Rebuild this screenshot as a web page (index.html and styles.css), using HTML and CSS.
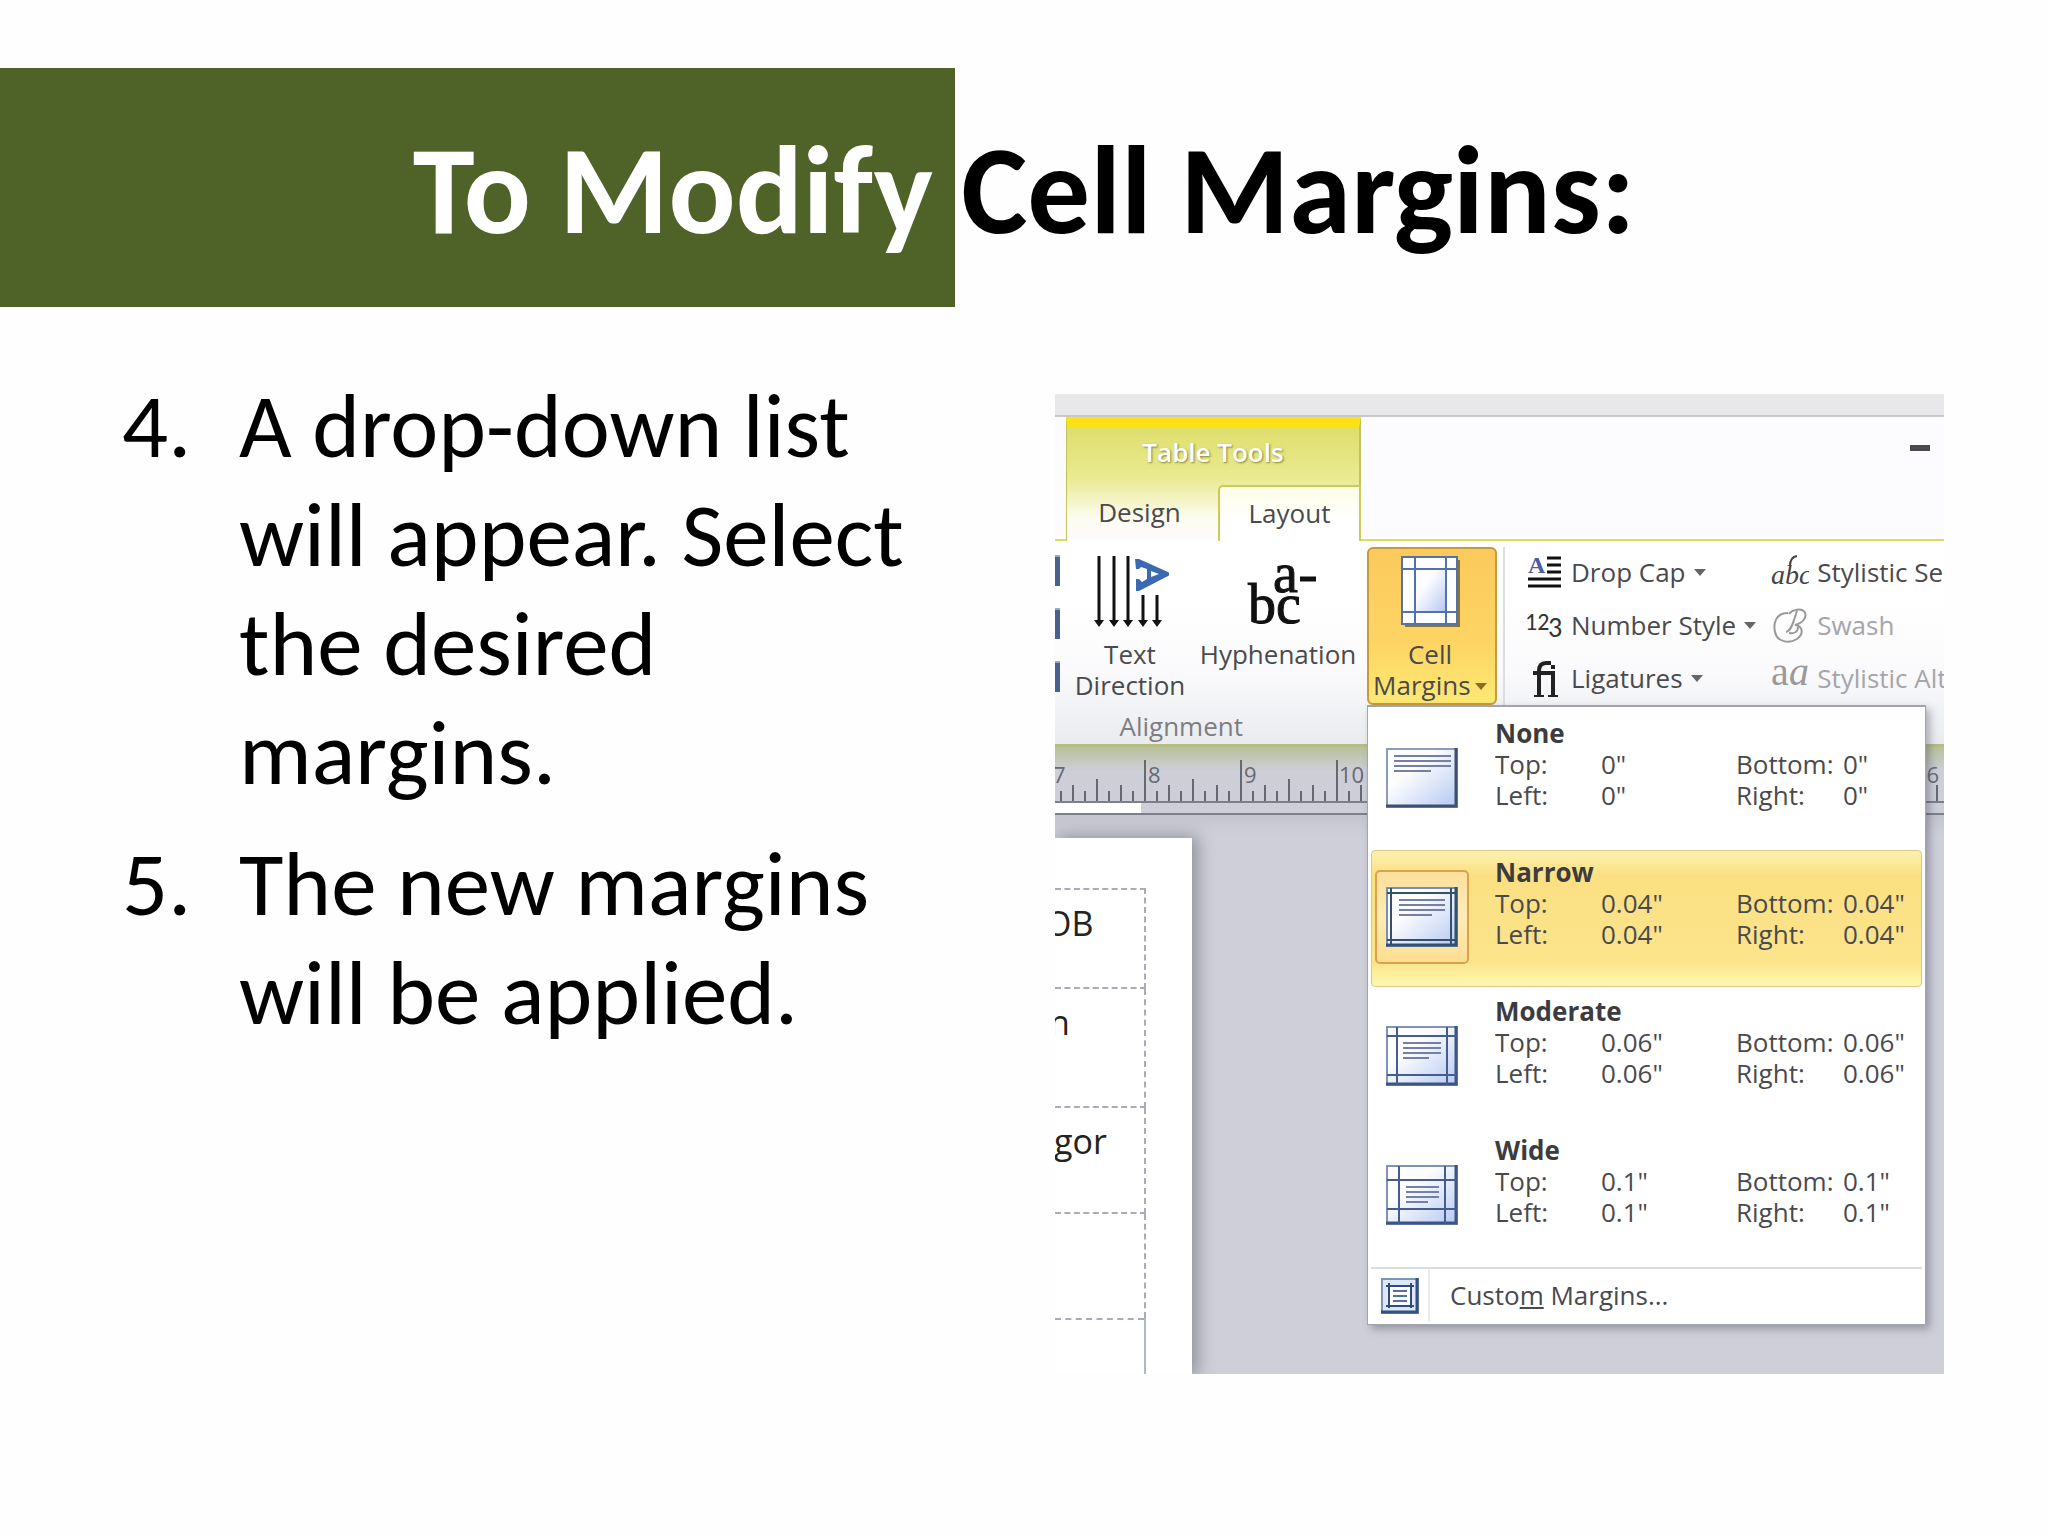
FILE: index.html
```html
<!DOCTYPE html>
<html lang="en">
<head>
<meta charset="utf-8">
<title>To Modify Cell Margins</title>
<link rel="stylesheet" href="styles.css">
</head>
<body>
<svg class="defs" width="0" height="0" aria-hidden="true">
  <defs>
    <linearGradient id="paper" x1="0" y1="0" x2="1" y2="1">
      <stop offset="0.35" stop-color="#fdfdff"/>
      <stop offset="1" stop-color="#b4c8f2"/>
    </linearGradient>
  </defs>
</svg>
<header class="banner">
  <h1 class="title"><span class="title-light">To Modify</span> Cell Margins:</h1>
</header>
<main class="content">
  <ol class="steps" start="4">
    <li class="step"><span>A drop-down list will appear. Select the desired margins.</span></li>
    <li class="step"><span>The new margins will be applied.</span></li>
  </ol>

  <section class="app" aria-label="Table Tools ribbon">
    <div class="app-top"></div>
    <div class="tabbar">
      <div class="context">
        <div class="context-label">Table Tools</div>
        <div class="tabs">
          <button class="tab" type="button">Design</button>
          <button class="tab tab-active" type="button">Layout</button>
        </div>
      </div>
      <button class="minimize" type="button" aria-label="Minimize"></button>
    </div>

    <div class="ribbon">
      <div class="group">
        <div class="group-tools">
          <div class="slivers"><i></i><i></i><i></i></div>
          <button class="tool tool-direction" type="button">
            <svg class="tool-icon" width="78" height="74" viewBox="0 0 78 74">
              <g stroke="#111" stroke-width="3">
                <path d="M8 1V68M23 1V68M37 1V68M52 40V68M66 40V68"/>
              </g>
              <path fill="#111" d="M3 65h10l-5 7zM18 65h10l-5 7zM32 65h10l-5 7zM47 65h10l-5 7zM61 65h10l-5 7z"/>
              <path fill="#3c69b4" fill-rule="evenodd" d="M44 4h4l31 14v2L48 36h-3V24h3l3 3 5-3V14l-6-2-2 2h-3zM60 16v6l8-3z"/>
            </svg>
            <span>Text<br>Direction</span>
          </button>
          <button class="tool tool-hyphen" type="button">
            <svg class="tool-icon" width="78" height="74" viewBox="0 0 78 74">
              <text class="glyph-serif" x="34" y="37">a</text>
              <text class="glyph-serif" x="9" y="68">bc</text>
              <path stroke="#111" stroke-width="5" d="M61 24h16"/>
            </svg>
            <span>Hyphenation</span>
          </button>
        </div>
        <div class="group-label">Alignment</div>
      </div>

      <div class="menu-anchor">
        <button class="tool tool-open" type="button" aria-expanded="true">
          <svg class="tool-icon" width="60" height="74" viewBox="0 0 60 74">
            <path fill="#8a7333" d="M5 5h55v67H5z"/>
            <path fill="#fff" d="M2 2h55v67H2z"/>
            <path fill="url(#paper)" d="M15 14h31v43H15z"/>
            <path fill="none" stroke="#5272a8" stroke-width="2" d="M2 2h55v67H2zM15 2v67M46 2v67M2 14h55M2 57h55"/>
          </svg>
          <span>Cell<br>Margins&thinsp;<i class="caret"></i></span>
        </button>
        <div class="menu" role="menu">
          <button class="option" type="button" role="menuitem">
            <span class="thumb"><svg width="72" height="60" viewBox="0 0 72 60">
              <path fill="url(#paper)" stroke="#8b9cba" stroke-width="2" d="M1 1h70v58H1z"/>
              <path fill="none" stroke="#3d4f73" stroke-width="3" d="M70 0v58H0"/>
              <path stroke="#7480a8" stroke-width="2" d="M8 8h57M8 13h57M8 18h57M8 23h37"/>
            </svg></span>
            <span class="values"><b>None</b>
              <span>Top:</span><span>0"</span><span>Bottom:</span><span>0"</span>
              <span>Left:</span><span>0"</span><span>Right:</span><span>0"</span></span>
          </button>
          <button class="option option-active" type="button" role="menuitem">
            <span class="thumb"><svg width="72" height="60" viewBox="0 0 72 60">
              <path fill="url(#paper)" stroke="#7890b0" stroke-width="2" d="M1 1h70v58H1z"/>
              <path fill="none" stroke="#35506f" stroke-width="3" d="M70 0v58H0"/>
              <path fill="none" stroke="#35506f" stroke-width="2" d="M5 1v58M65 1v58M1 6h70M1 53h70"/>
              <path stroke="#7480a8" stroke-width="2" d="M13 13h46M13 18h46M13 23h46M13 28h33"/>
            </svg></span>
            <span class="values"><b>Narrow</b>
              <span>Top:</span><span>0.04"</span><span>Bottom:</span><span>0.04"</span>
              <span>Left:</span><span>0.04"</span><span>Right:</span><span>0.04"</span></span>
          </button>
          <button class="option" type="button" role="menuitem">
            <span class="thumb"><svg width="72" height="60" viewBox="0 0 72 60">
              <path fill="url(#paper)" stroke="#7f92b8" stroke-width="2" d="M1 1h70v58H1z"/>
              <path fill="none" stroke="#3d5585" stroke-width="3" d="M70 0v58H0"/>
              <path fill="none" stroke="#455c8c" stroke-width="2" d="M11 1v58M61 1v58M1 10h70M1 49h70"/>
              <path stroke="#7480a8" stroke-width="2" d="M17 17h38M17 22h38M17 27h38M17 32h26"/>
            </svg></span>
            <span class="values"><b>Moderate</b>
              <span>Top:</span><span>0.06"</span><span>Bottom:</span><span>0.06"</span>
              <span>Left:</span><span>0.06"</span><span>Right:</span><span>0.06"</span></span>
          </button>
          <button class="option" type="button" role="menuitem">
            <span class="thumb"><svg width="72" height="60" viewBox="0 0 72 60">
              <path fill="url(#paper)" stroke="#7f92b8" stroke-width="2" d="M1 1h70v58H1z"/>
              <path fill="none" stroke="#3d5585" stroke-width="3" d="M70 0v58H0"/>
              <path fill="none" stroke="#455c8c" stroke-width="2" d="M13 1v58M59 1v58M1 15h70M1 44h70"/>
              <path stroke="#7480a8" stroke-width="2" d="M20 22h33M20 27h33M20 32h33M20 37h22"/>
            </svg></span>
            <span class="values"><b>Wide</b>
              <span>Top:</span><span>0.1"</span><span>Bottom:</span><span>0.1"</span>
              <span>Left:</span><span>0.1"</span><span>Right:</span><span>0.1"</span></span>
          </button>
          <button class="custom" type="button" role="menuitem">
            <span class="custom-icon"><svg width="38" height="36" viewBox="0 0 38 36">
              <path fill="#dde7fa" stroke="#7f92b8" stroke-width="2" d="M1 1h36v34H1z"/>
              <path fill="none" stroke="#35507f" stroke-width="3" d="M36 0v34H0"/>
              <path fill="#fff" d="M9 8h21v20H9z"/>
              <path fill="none" stroke="#2f4a7c" stroke-width="2" d="M8 5v25M30 5v25M5 8h28M5 28h28"/>
              <path stroke="#5470a4" stroke-width="2" d="M12 13h14M12 18h14M12 23h14"/>
            </svg></span>
            <span>Custo<u>m</u> Margins...</span>
          </button>
        </div>
      </div>

      <div class="features">
        <button class="feature" type="button">
          <svg width="38" height="38" viewBox="0 0 38 38">
            <path stroke="#111" stroke-width="3" d="M22 4h14M22 11h14M22 18h14M3 25h33M3 32h33"/>
            <text class="glyph-cap" x="3" y="19">A</text>
          </svg>Drop Cap <i class="caret"></i></button>
        <button class="feature" type="button">
          <svg width="38" height="38" viewBox="0 0 38 38">
            <text class="glyph-num" x="0" y="23">12</text>
            <text class="glyph-num glyph-three" x="23" y="30">3</text>
          </svg>Number Style <i class="caret"></i></button>
        <button class="feature" type="button">
          <svg width="38" height="38" viewBox="0 0 38 38">
            <path fill="none" stroke="#222" stroke-width="4" d="M14 36V11q0-8 7-8h5M28 36V13H8M28 5v4"/>
            <path stroke="#222" stroke-width="2" d="M9 36h10M23 36h10"/>
          </svg>Ligatures <i class="caret"></i></button>
      </div>
      <div class="features">
        <button class="feature" type="button">
          <svg width="38" height="38" viewBox="0 0 38 38">
            <text class="glyph-abc" x="0" y="30">abc</text>
            <path fill="none" stroke="#444" stroke-width="2" d="M19 12q0-9 7-10"/>
          </svg>Stylistic Se</button>
        <button class="feature" type="button" disabled>
          <svg width="38" height="38" viewBox="0 0 38 38">
            <path fill="none" stroke="#999" stroke-width="2" d="M17 6C5 6 2 16 4 25c2 10 14 12 22 7 7-5 6-13-2-14 8-2 12-8 10-12-3-6-13-3-16 1M26 4C23 12 21 24 15 25M18 26c5 1 9-1 9-6"/>
          </svg>Swash</button>
        <button class="feature" type="button" disabled>
          <svg width="38" height="38" viewBox="0 0 38 38">
            <text class="glyph-aa" x="0" y="25">a</text>
            <text class="glyph-aa glyph-italic" x="18" y="25">a</text>
          </svg>Stylistic Alt</button>
      </div>
    </div>

    <div class="ruler">
      <svg width="889" height="68" viewBox="0 0 889 68">
        <defs>
          <pattern id="inch" x="89" y="0" width="96" height="57" patternUnits="userSpaceOnUse">
            <path stroke="#666872" stroke-width="2" d="M1 13v42M13 44v12M25 38v18M37 44v12M49 32v24M61 44v12M73 38v18M85 44v12"/>
          </pattern>
        </defs>
        <path fill="url(#inch)" d="M0 0h889v56H0z"/>
        <path fill="#fff" d="M0 56h86v10H0z"/>
        <path stroke="#7d7f8a" stroke-width="2" d="M0 55h889M0 67h889"/>
        <g class="ruler-digits">
          <text x="-2" y="36">7</text><text x="93" y="36">8</text><text x="189" y="36">9</text>
          <text x="284" y="36">10</text><text x="859" y="36">16</text>
        </g>
      </svg>
    </div>

    <div class="document">
      <div class="page">
        <table class="grid">
          <tr class="row-head"><td class="cut-wide">OB</td></tr>
          <tr class="row-tall"><td class="cut">n</td></tr>
          <tr class="row-mid"><td class="cut-slight">gor</td></tr>
          <tr class="row-mid"><td></td></tr>
          <tr class="row-last"><td></td></tr>
        </table>
      </div>
    </div>
  </section>
</main>
</body>
</html>
```

FILE: styles.css
```css
* {
  box-sizing: border-box;
}

body {
  margin: 0;
  background: #fefefe;
  color: #000;
  font-family: Carlito, Lato, sans-serif;
}

button {
  margin: 0;
  padding: 0;
  border: 0;
  background: none;
  color: inherit;
  font: inherit;
  text-align: left;
}

i {
  font-style: normal;
}

svg {
  display: block;
  flex: none;
}

.defs {
  position: absolute;
}

/* Slide heading */
.banner {
  display: flex;
  justify-content: center;
  align-items: center;
  margin-top: 68px;
  min-height: 239px;
  padding-top: 6px;
  background: linear-gradient(#4f6228, #4f6228) left / 46.65% 100% no-repeat;
}

.title {
  margin: 0;
  font-size: 125px;
  line-height: 128px;
  font-weight: 700;
  white-space: nowrap;
}

.title-light {
  color: #fff;
}

/* Slide body */
.content {
  display: grid;
  grid-template-columns: minmax(0, 1fr) 889px;
  column-gap: 120px;
  align-items: start;
  padding: 64px 104px 64px 122px;
}

.steps {
  display: grid;
  gap: 22px;
  margin: 0;
  padding: 0;
  list-style: none;
  counter-reset: step 3;
  font-size: 91px;
  line-height: 109px;
}

.step {
  display: grid;
  grid-template-columns: 117px 1fr;
  counter-increment: step;
}

.step::before {
  content: counter(step) ".";
}

/* Application window */
.app {
  margin-top: 23px;
  overflow: hidden;
  color: #4a4a4e;
  font-family: "Open Sans", "Noto Sans", sans-serif;
  font-size: 26px;
  line-height: 31px;
}

.app-top {
  height: 23px;
  background: #e8e7ea;
  border-bottom: 2px solid #c9c7cc;
}

.tabbar {
  display: flex;
  justify-content: space-between;
  align-items: flex-start;
  height: 124px;
  padding: 0 14px 0 11px;
  background: #fcfbfe;
  border-bottom: 2px solid #dcdc62;
}

.context {
  width: 295px;
  border: 2px solid #c3c25c;
  border-width: 0 2px 0 1px;
  border-top: 10px solid #fce215;
  background: linear-gradient(#dede6c, #eaea92 45%, #fcfcf0 80%, #fcfbfe);
}

.context-label {
  height: 58px;
  padding-top: 10px;
  color: #fff;
  font-weight: 600;
  text-align: center;
  text-shadow: 1px 1px 2px #85853c;
}

.tabs {
  display: grid;
  grid-template-columns: 1fr 141px;
}

.tab {
  height: 54px;
  padding-right: 6px;
  text-align: center;
}

.tab-active {
  height: 56px;
  margin-right: -2px;
  padding: 0 0 2px;
  border: 2px solid #cbcb55;
  border-bottom: 0;
  border-radius: 5px 0 0 0;
  background: linear-gradient(#fdfde6, #fff 60%);
}

.minimize {
  width: 20px;
  height: 6px;
  margin-top: 28px;
  background: #4a4a50;
}

.ribbon {
  display: flex;
  align-items: flex-start;
  height: 206px;
  background: linear-gradient(#fff 30%, #fafafc 65%, #e9ebef);
  border-bottom: 3px solid #b5bd80;
  white-space: nowrap;
}

.group {
  flex: none;
  width: 312px;
}

.group-tools {
  display: flex;
  height: 170px;
}

.slivers {
  display: grid;
  grid-auto-rows: 31px;
  gap: 22px;
  width: 13px;
  padding-top: 14px;
}

.slivers i {
  width: 5px;
  background: #48618f;
  border-top: 2px solid #9aa8c0;
}

.tool {
  display: flex;
  flex-direction: column;
  align-items: center;
  padding-top: 14px;
  text-align: center;
}

.tool-icon {
  margin-bottom: 10px;
}

.tool-direction {
  width: 124px;
}

.tool-hyphen {
  width: 172px;
}

.group-label {
  padding-right: 124px;
  color: #7d7d82;
  text-align: right;
}

.glyph-serif {
  font: 56px "Liberation Serif", serif;
  fill: #111;
  stroke: #111;
}

.glyph-cap {
  font: bold 24px "Liberation Serif", serif;
  fill: #4a5da0;
}

.glyph-num {
  font: 24px Carlito, Lato, sans-serif;
  fill: #333;
}

.glyph-three {
  font-size: 28px;
}

.glyph-abc {
  font: italic 28px "Liberation Serif", serif;
  fill: #444;
}

.glyph-aa {
  font: 40px "Liberation Serif", serif;
  fill: #999;
}

.glyph-italic {
  font-style: italic;
}

.caret {
  display: inline-block;
  border: 6px solid transparent;
  border-top: 7px solid #666;
  border-bottom: 0;
  vertical-align: 5px;
}

/* Open drop-down */
.menu-anchor {
  position: relative;
  flex: none;
  width: 138px;
  margin-top: 6px;
  border-right: 2px solid #dcdde0;
}

.tool-open {
  width: 130px;
  height: 158px;
  padding: 6px 4px 0 0;
  border: 2px solid #c79a3c;
  border-radius: 6px;
  background: linear-gradient(#fbc95c, #fdd464 60%, #fde974);
}

.tool-open .caret {
  border-top-color: #8b6a22;
}

.menu {
  position: absolute;
  top: 158px;
  left: 0;
  z-index: 2;
  display: grid;
  gap: 2px;
  width: 559px;
  padding: 4px 3px 0;
  border: 1px solid #a3a5ad;
  border-top-width: 2px;
  background: #fff;
  box-shadow: 4px 4px 8px rgba(70, 70, 90, 0.4);
}

.option {
  display: grid;
  grid-template-columns: 94px 1fr;
  column-gap: 26px;
  height: 137px;
  padding: 6px 0 0 3px;
  border: 1px solid transparent;
  border-radius: 4px;
}

.option-active {
  border-color: #d9c98a;
  background: linear-gradient(#fdf0b0, #fbe082 18%, #fce48c 82%, #fef8ae);
}

.thumb {
  display: grid;
  place-items: center;
  height: 94px;
  margin-top: 13px;
  border: 2px solid transparent;
  border-radius: 5px;
}

.option-active .thumb {
  border-color: #dba24a;
  background: linear-gradient(#fcdf9c, #fdecb8 50%, #fdde90);
}

.values {
  display: grid;
  grid-template-columns: 106px 135px 107px 1fr;
  grid-auto-rows: 31px;
}

.values b {
  grid-column: 1 / -1;
  color: #3c3c40;
}

.custom {
  display: flex;
  align-items: center;
  gap: 20px;
  height: 57px;
  padding-bottom: 2px;
  border-top: 2px solid #dddde0;
}

.custom-icon {
  display: grid;
  align-items: center;
  width: 59px;
  height: 53px;
  padding-left: 10px;
  border-right: 2px solid #ececee;
}

.features {
  flex: none;
  padding: 5px 0 0 20px;
}

.features + .features {
  padding-left: 15px;
}

.feature {
  display: flex;
  align-items: center;
  gap: 8px;
  height: 53px;
}

.feature:disabled {
  color: #a5a5aa;
}

/* Ruler and page */
.ruler {
  height: 68px;
  overflow: hidden;
  background: linear-gradient(#b9c19c, #cdced8 24px);
}

.ruler-digits {
  font: 22px "Open Sans", sans-serif;
  fill: #666872;
}

.document {
  height: 559px;
  padding-top: 23px;
  background: linear-gradient(#c4c5ce, #cecfd9 20px);
}

.page {
  width: 137px;
  height: 536px;
  padding-top: 50px;
  background: #fff;
  box-shadow: 4px 0 16px 2px #8f929c;
}

.grid {
  width: 91px;
  border-collapse: collapse;
  table-layout: fixed;
  color: #222;
  font-size: 34px;
  line-height: 38px;
}

.grid td {
  padding: 14px 0 0;
  border: 2px dashed #a9abb8;
  border-left: 0;
  vertical-align: top;
}

.grid .cut-wide {
  text-indent: -10px;
}

.grid .cut {
  text-indent: -6px;
}

.grid .cut-slight {
  text-indent: -1px;
}

.row-head {
  height: 99px;
}

.row-tall {
  height: 119px;
}

.row-mid {
  height: 106px;
}

.row-last {
  height: 56px;
}

.grid .row-last td {
  border-right: 2px solid #a8bccb;
  border-bottom: 0;
}
```
